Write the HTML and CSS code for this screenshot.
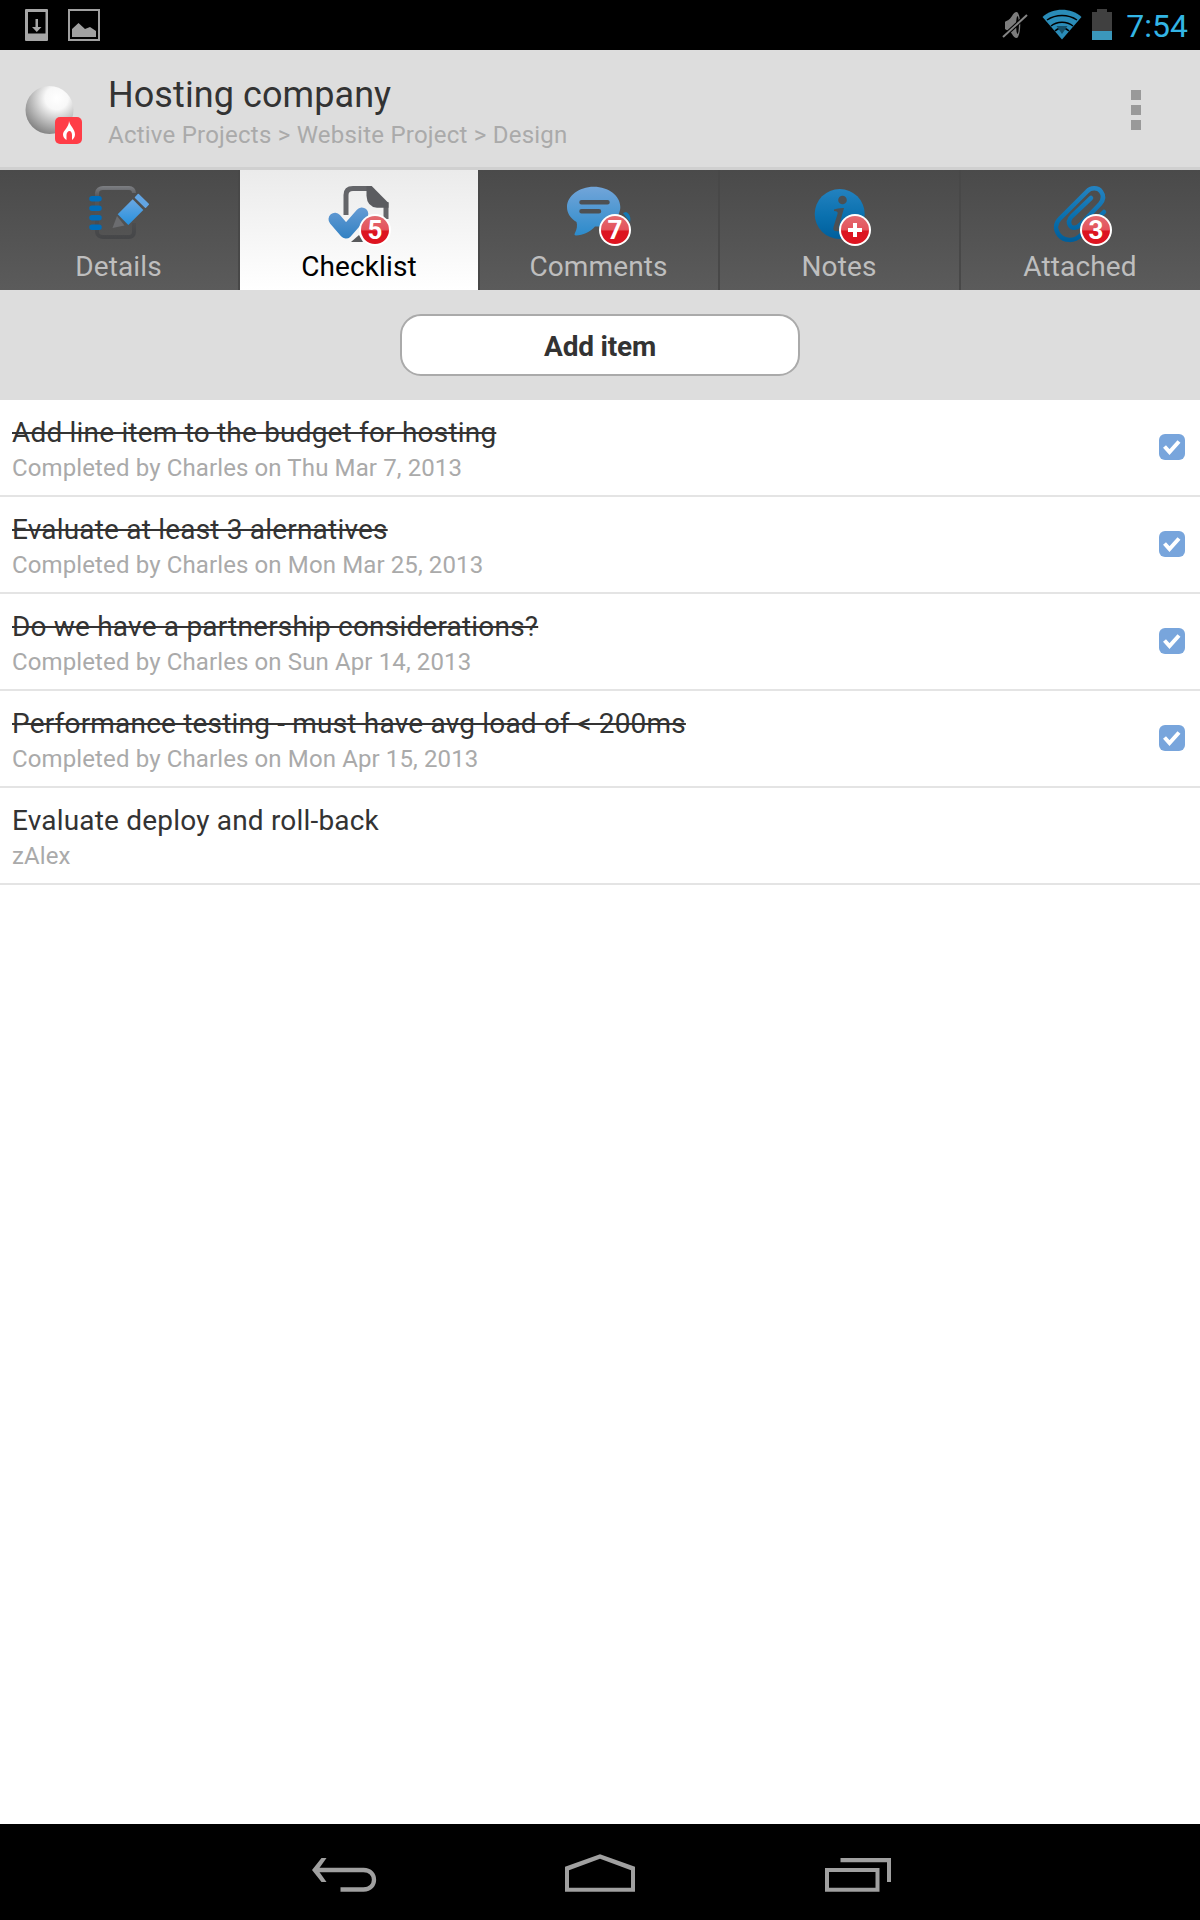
FILE: index.html
```
<!DOCTYPE html>
<html lang="en">
<head>
  <meta charset="UTF-8" />
  <meta name="viewport" content="width=device-width, initial-scale=1.0"/>
  <title>Hosting company - Checklist</title>
  <link rel="stylesheet" href="styles.css">
</head>
<body>
  <!-- shared gradients -->
  <svg class="defs" width="0" height="0">
    <defs>
      <radialGradient id="ball" cx="0.65" cy="0.25" r="0.8">
        <stop offset="0" stop-color="#fff"/>
        <stop offset="0.3" stop-color="#f8f8f8"/>
        <stop offset="1" stop-color="#808080"/>
      </radialGradient>
      <linearGradient id="sky" x1="0" y1="0" x2="0" y2="1">
        <stop offset="0" stop-color="#72a5d9"/>
        <stop offset="1" stop-color="#2c8bcb"/>
      </linearGradient>
      <linearGradient id="check" gradientUnits="userSpaceOnUse" x1="0" y1="26" x2="0" y2="58">
        <stop offset="0" stop-color="#659bd4"/>
        <stop offset="1" stop-color="#2f80c2"/>
      </linearGradient>
      <linearGradient id="pen" x1="0" y1="0" x2="0" y2="1">
        <stop offset="0" stop-color="#6aa8e4"/>
        <stop offset="1" stop-color="#2790dc"/>
      </linearGradient>
      <linearGradient id="blue" x1="0" y1="0" x2="0" y2="1">
        <stop offset="0" stop-color="#2382c0"/>
        <stop offset="0.55" stop-color="#0a70ae"/>
        <stop offset="1" stop-color="#005f9c"/>
      </linearGradient>
      <linearGradient id="book" gradientUnits="userSpaceOnUse" x1="0" y1="4" x2="0" y2="57">
        <stop offset="0" stop-color="#7d7f83"/>
        <stop offset="0.2" stop-color="#55565a"/>
        <stop offset="0.5" stop-color="#505153"/>
        <stop offset="1" stop-color="#454648"/>
      </linearGradient>
      <linearGradient id="red" x1="0" y1="0" x2="0" y2="1">
        <stop offset="0" stop-color="#e36a70"/>
        <stop offset="0.48" stop-color="#e4545c"/>
        <stop offset="0.55" stop-color="#dc1420"/>
        <stop offset="1" stop-color="#de1420"/>
      </linearGradient>
    </defs>
  </svg>

  <div class="status-bar">
    <div class="status-left">
      <svg width="24" height="33" viewBox="0 0 24 33">
        <path d="M2 1h21q1 0 1 1v30q0 1-1 1H2q-1 0-1-1V2q0-1 1-1zM4 4V25.500h17.500V4z" fill="#a6a6a6" fill-rule="evenodd"/>
        <path d="M11.500 11h2.500v8h3.500l-4.700 5-4.800-5h3.500z" fill="#a6a6a6"/>
      </svg>
      <svg width="32" height="33" viewBox="0 0 32 33">
        <rect x="1" y="2" width="30" height="30" fill="none" stroke="#a0a0a0" stroke-width="2"/>
        <path d="M4 29v-8l6.500-6 6.500 6 5-2 6 4v6z" fill="#a0a0a0"/>
      </svg>
    </div>
    <div class="status-right">
      <svg width="26" height="30" viewBox="0 0 26 30">
        <path d="M3 11c2-2 4-1 7-6 2-4 5-5 6-3 3 5 3 18 0 24-1 2-4 1-6-3-3-5-5-3-7-5z" fill="#7c7c7c"/>
        <ellipse cx="15.500" cy="14" rx="1.400" ry="9" fill="#000"/>
        <path d="M1 26L25 4" stroke="#000" stroke-width="4"/>
        <path d="M1 26L25 4" stroke="#858585" stroke-width="2"/>
      </svg>
      <svg class="wifi" width="40" height="31" viewBox="0 0 40 31">
        <path d="M0.500 8C11-1.700 29-1.700 39.500 8L20 30.500z" fill="#2a8cb8"/>
        <path d="M5 11C14 5 26 5 35 11M9 17c6-5 16-5 22 0M13 22c4-4 10-4 14 0" fill="none" stroke="#000" stroke-width="1.500"/>
        <path d="M14.500 17h11L20 25z" fill="#15516b"/>
      </svg>
      <svg class="battery" width="20" height="31" viewBox="0 0 20 31">
        <path d="M0 3h5V0h10v3h5v20H0z" fill="#404040"/>
        <path d="M0 22h20v9H0z" fill="#3b97bb"/>
      </svg>
      <span class="clock">7:54</span>
    </div>
  </div>

  <header>
    <svg class="logo" width="60" height="62" viewBox="0 0 60 62">
      <circle cx="24.500" cy="25" r="24" fill="url(#ball)"/>
      <rect x="30" y="32" width="27" height="27" rx="5" fill="#ff3d47"/>
      <path d="M44 36c1 5 6 8 6 13.500 0 2.500-1.500 4.500-3 5.500V50c0-2-1-4-2.500-4s-3 2-3 4v5c-2-1-3.500-3-3.500-5.500 0-4 6-7 6-13.500z" fill="#fff"/>
    </svg>
    <div class="titles">
      <h1>Hosting company</h1>
      <p>Active Projects &gt; Website Project &gt; Design</p>
    </div>
    <div class="overflow"><i></i><i></i><i></i></div>
  </header>

  <nav class="tabs">
    <div class="tab">
      <svg width="72" height="66" viewBox="0 0 72 66">
        <path d="M14 11c0-3 3-5 6-5h26c3 0 5 2 5 5M14 50c0 3 3 5 6 5h26c3 0 5-2 5-5v-9M14 11v39" fill="none" stroke="url(#book)" stroke-width="4"/>
        <path d="M9 16.700h7M9 26.300h7M9 35.800h7M9 45.300h7" stroke="#006dba" stroke-width="5.500" stroke-linecap="round"/>
        <path d="M34 34l7.500 9.500L29.500 46z" fill="#6b6c6f"/>
        <path d="M49.700 17.300L60.300 28 45.300 43 34.700 32.300z" fill="url(#pen)"/>
        <path d="M55.300 12.500l10 9.800-2.800 3-10-9.800z" fill="#62a5e4" stroke="#62a5e4" stroke-width="1.500" stroke-linejoin="round"/>
      </svg>
      <span>Details</span>
    </div>
    <div class="tab active">
      <svg width="72" height="66" viewBox="0 0 72 66">
        <path d="M23 33V13q0-6.500 7-6.500h17M63 20v17" fill="none" stroke="#646569" stroke-width="5"/>
        <path d="M43.500 4h5.200l16.800 17v4.800H54q-10-1-10.500-12z" fill="#5b5c60"/>
        <path d="M28 60h12l-4-7z" fill="#58595b"/>
        <path d="M12 37.200L23 50 38.800 32" fill="none" stroke="url(#check)" stroke-width="13" stroke-linecap="round" stroke-linejoin="round"/>
        <circle cx="52" cy="48" r="16" fill="#fff"/>
        <circle cx="52" cy="48" r="14" fill="url(#red)"/>
        <text class="num" x="52" y="57">5</text>
      </svg>
      <span>Checklist</span>
    </div>
    <div class="tab">
      <svg width="72" height="66" viewBox="0 0 72 66">
        <path d="M60 31l3-1c4 2 5 6 4 10z" fill="#1179b5"/>
        <path d="M30.700 4.700C46 4.700 57.300 14 57.300 25S46 45.500 32 44.500C27 50 20 53 13 53.500c-1.500 0-2-1-1-2.500 2-4 2.500-8 1.500-11C7 36 4 31 4 25 4 14 16 4.700 30.700 4.700z" fill="url(#sky)"/>
        <path d="M18.500 20.300h26M18.500 29.300h17.500" stroke="#4d5053" stroke-width="4.500" stroke-linecap="round"/>
        <circle cx="52" cy="48" r="16" fill="#fff"/>
        <circle cx="52" cy="48" r="14" fill="url(#red)"/>
        <text class="num" x="52" y="57">7</text>
      </svg>
      <span>Comments</span>
    </div>
    <div class="tab">
      <svg width="72" height="66" viewBox="0 0 72 66">
        <circle cx="36.700" cy="32" r="25" fill="url(#blue)"/>
        <circle cx="39.500" cy="18" r="4.300" fill="#4b5054"/>
        <path d="M31 27.500q4-1.700 10-1.500l-5 18q-1 3 2 3l-1 2q-8 1.500-6.500-4l4-13q1-3-3.500-3z" fill="#4b5054"/>
        <circle cx="52" cy="48" r="16" fill="#fff"/>
        <circle cx="52" cy="48" r="14" fill="url(#red)"/>
        <path d="M52 41v14M45 48h14" stroke="#fff" stroke-width="4"/>
      </svg>
      <span>Notes</span>
    </div>
    <div class="tab">
      <svg width="72" height="66" viewBox="0 0 72 66">
        <path d="M60 30L37 53C30 60 20 59 15 53 10.500 47 11.500 41 16 36.500L43 9.500C47 5 54 5.500 57 9.500 60 13.500 59.500 18 56 22L37 42C33 46.500 28 47 26 43.500 24 40 25 37 28 34L47 16" fill="none" stroke="url(#blue)" stroke-width="4.500" stroke-linecap="round"/>
        <circle cx="52" cy="48" r="16" fill="#fff"/>
        <circle cx="52" cy="48" r="14" fill="url(#red)"/>
        <text class="num" x="52" y="57">3</text>
      </svg>
      <span>Attached</span>
    </div>
  </nav>

  <div class="toolbar">
    <button class="add-btn">Add item</button>
  </div>

  <ul class="checklist">
    <li class="done">
      <div>
        <h2>Add line item to the budget for hosting</h2>
        <p>Completed by Charles on Thu Mar 7, 2013</p>
      </div>
      <svg class="box" width="28" height="28" viewBox="0 0 28 28"><rect x="1" y="1" width="26" height="26" rx="6"/><path d="M6.500 13.500l5 5.500 9.500-10.500"/></svg>
    </li>
    <li class="done">
      <div>
        <h2>Evaluate at least 3 alernatives</h2>
        <p>Completed by Charles on Mon Mar 25, 2013</p>
      </div>
      <svg class="box" width="28" height="28" viewBox="0 0 28 28"><rect x="1" y="1" width="26" height="26" rx="6"/><path d="M6.500 13.500l5 5.500 9.500-10.500"/></svg>
    </li>
    <li class="done">
      <div>
        <h2>Do we have a partnership considerations?</h2>
        <p>Completed by Charles on Sun Apr 14, 2013</p>
      </div>
      <svg class="box" width="28" height="28" viewBox="0 0 28 28"><rect x="1" y="1" width="26" height="26" rx="6"/><path d="M6.500 13.500l5 5.500 9.500-10.500"/></svg>
    </li>
    <li class="done">
      <div>
        <h2>Performance testing - must have avg load of &lt; 200ms</h2>
        <p>Completed by Charles on Mon Apr 15, 2013</p>
      </div>
      <svg class="box" width="28" height="28" viewBox="0 0 28 28"><rect x="1" y="1" width="26" height="26" rx="6"/><path d="M6.500 13.500l5 5.500 9.500-10.500"/></svg>
    </li>
    <li>
      <div>
        <h2>Evaluate deploy and roll-back</h2>
        <p>zAlex</p>
      </div>
    </li>
  </ul>

  <footer class="nav-bar">
    <svg width="70" height="52" viewBox="0 0 70 52">
      <path d="M8 22h47.500c14 0 14 19.500 0 19.500H32.500" fill="none" stroke="#a0a0a0" stroke-width="4.300"/>
      <path d="M13.500 10h5L10 22l8.500 12h-5L4 22z" fill="#a0a0a0"/>
    </svg>
    <svg width="76" height="52" viewBox="0 0 76 52">
      <path d="M3 18.700L38 6.300 73 18.700v25H3zM7 22.300V39.700h62V22.300L38 10.700z" fill="#a0a0a0" fill-rule="evenodd"/>
    </svg>
    <svg width="70" height="52" viewBox="0 0 70 52">
      <path d="M1 20h54.500v23.700H1zM5 24v15.700h46.500V24z" fill="#a0a0a0" fill-rule="evenodd"/>
      <path d="M16.500 10H67v24h-4V14.300H16.500z" fill="#a0a0a0"/>
    </svg>
  </footer>
</body>
</html>
```

FILE: styles.css
```
* {
  box-sizing: border-box;
  margin: 0;
  padding: 0;
}
body {
  width: 1200px;
  height: 1920px;
  display: flex;
  flex-direction: column;
  overflow: hidden;
  background: #fff;
  color: #333;
  font-family: Roboto, sans-serif;
}
svg {
  display: block;
  flex: none;
}
.defs {
  position: absolute;
}
.status-bar {
  flex: none;
  height: 50px;
  padding: 0 12px 0 24px;
  background: #000;
  display: flex;
  justify-content: space-between;
}
.status-left {
  display: flex;
  gap: 20px;
  padding-top: 8px;
}
.status-right {
  display: flex;
  padding-top: 9px;
}
.status-right svg {
  margin-top: 2px;
}
.status-right .wifi {
  margin: 0 10px 0 14px;
}
.status-right .battery {
  margin: 0 14px 0 0;
}
.clock {
  color: #33b5e5;
  font-size: 32px;
  line-height: 34px;
}
header {
  flex: none;
  height: 120px;
  background: #ddd;
  border-bottom: 3px solid #d0d0d0;
  display: flex;
  padding-left: 25px;
}
.logo {
  margin-top: 35px;
}
.titles {
  flex: 1;
  padding: 24px 0 0 23px;
}
.titles h1 {
  font-size: 36px;
  font-weight: 400;
  line-height: 42px;
  letter-spacing: 0.08px;
}
.titles p {
  font-size: 24px;
  line-height: 28px;
  margin-top: 5px;
  color: #aaa;
  letter-spacing: 0.23px;
}
.overflow {
  display: flex;
  flex-direction: column;
  gap: 5px;
  padding: 40px 59px 0 0;
}
.overflow i {
  width: 10px;
  height: 10px;
  background: #999;
}
.tabs {
  flex: none;
  height: 120px;
  display: grid;
  grid-template-columns: 240px 240px 240px 241px 239px;
  background: linear-gradient(#4a4a4a, #5b5b5b);
}
.tab {
  display: flex;
  flex-direction: column;
  align-items: center;
  padding: 12px 1px 0 0;
  border-right: 2px solid #484848;
  color: #bebebe;
  font-size: 28px;
  line-height: 34px;
  letter-spacing: 0.12px;
}
.tab:last-child {
  border-right: none;
}
.tab span {
  margin-top: 2px;
}
.tab.active {
  padding-right: 0;
  background: linear-gradient(#ebebeb, #fff);
  background-clip: padding-box;
  color: #000;
}
.num {
  fill: #fff;
  font: bold 26px Roboto, sans-serif;
  text-anchor: middle;
}
.toolbar {
  flex: none;
  height: 110px;
  padding-top: 24px;
  background: #ddd;
  display: flex;
  justify-content: center;
  align-items: flex-start;
}
.add-btn {
  width: 400px;
  height: 62px;
  border: 2px solid #aaa;
  border-radius: 21px;
  background: #fff;
  color: #333;
  font: bold 28px Roboto, sans-serif;
  letter-spacing: -0.2px;
  padding-top: 2px;
}
.checklist {
  flex: 1;
  list-style: none;
}
.checklist li {
  height: 97px;
  padding: 14px 14px 0 12px;
  border-bottom: 2px solid #e4e4e4;
  display: flex;
  justify-content: space-between;
  align-items: flex-start;
}
.checklist h2 {
  margin-top: 2px;
  font-size: 28px;
  font-weight: 400;
  line-height: 34px;
  letter-spacing: 0.19px;
}
.checklist p {
  margin-top: 3px;
  color: #aaa;
  font-size: 24px;
  line-height: 30px;
  letter-spacing: 0.12px;
}
.done h2 {
  text-decoration: line-through;
  text-decoration-thickness: 2px;
}
.box {
  margin-top: 19px;
}
.box rect {
  fill: #78a5dc;
}
.box path {
  fill: none;
  stroke: #fff;
  stroke-width: 4;
}
.nav-bar {
  flex: none;
  height: 96px;
  padding: 24px 0 0 308px;
  background: #000;
  display: flex;
}
.nav-bar svg:nth-child(2) {
  margin-left: 184px;
}
.nav-bar svg:nth-child(3) {
  margin-left: 186px;
}
```
